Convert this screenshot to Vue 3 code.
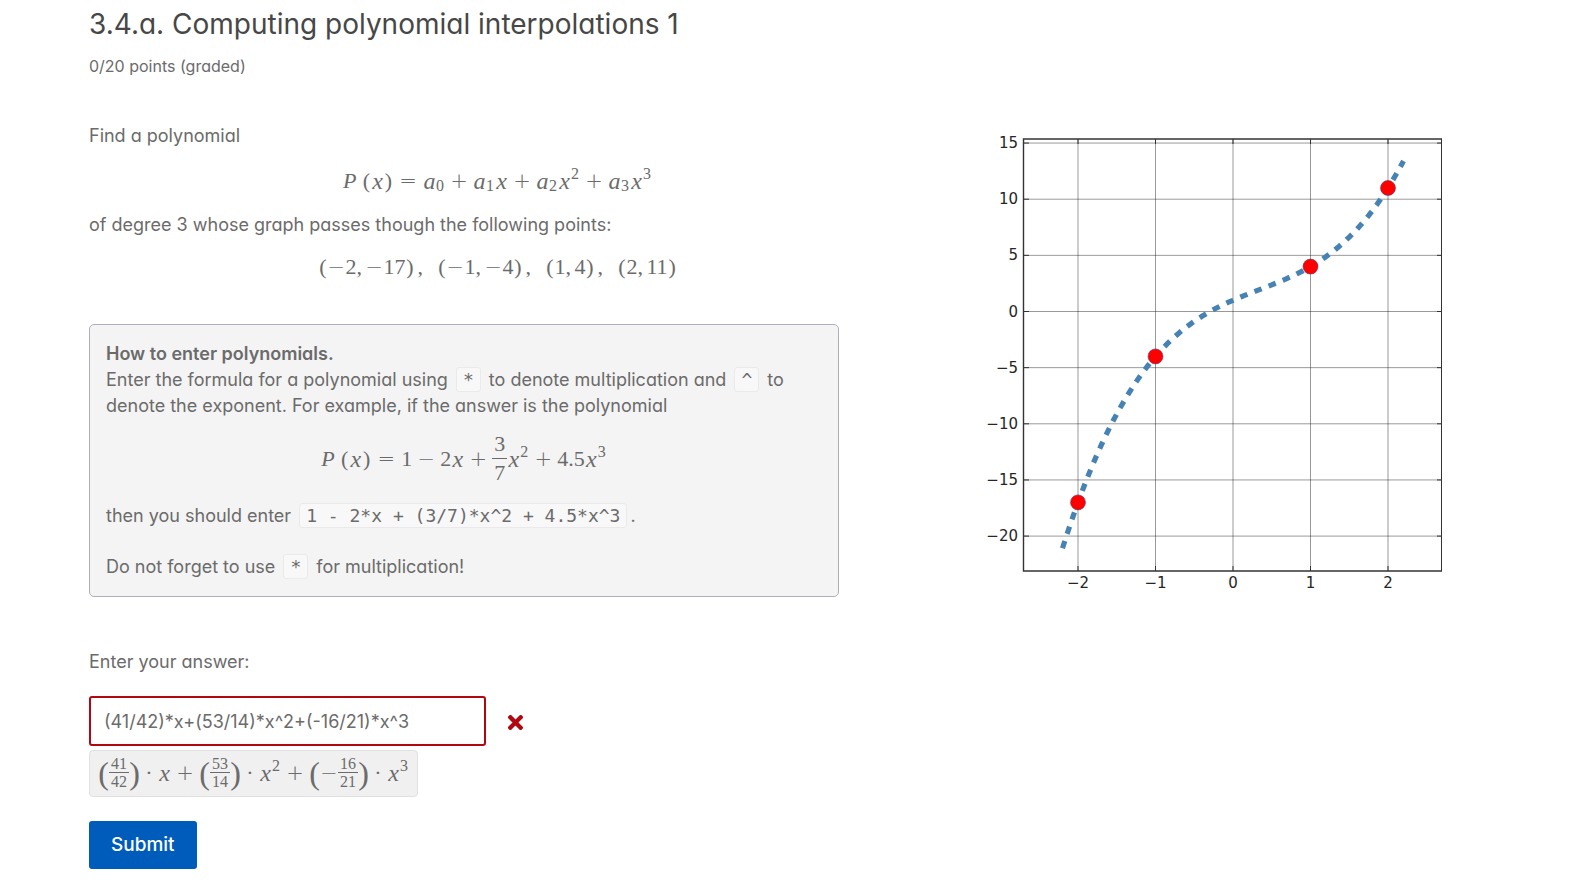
<script setup>
import { ref } from 'vue'

const answer = ref('(41/42)*x+(53/14)*x^2+(-16/21)*x^3')

const px = (x) => 253 + x * 77.5
const py = (y) => 181.5 - y * 11.23
const xTicks = [-2, -1, 0, 1, 2]
const yTicks = [15, 10, 5, 0, -5, -10, -15, -20]
const points = [[-2, -17], [-1, -4], [1, 4], [2, 11]]
const label = (n) => String(n).replace('-', '−')
const cubic = (x) => 1 + 3 * x - x * x + x * x * x
const curve = Array.from({ length: 89 }, (_, i) => {
  const x = -2.2 + i * 0.05
  return `${px(x).toFixed(2)},${py(cubic(x)).toFixed(2)}`
}).join(' ')
</script>

<template>
  <main class="problem">
    <h1>3.4.a. Computing polynomial interpolations 1</h1>
    <p class="points">0/20 points (graded)</p>

    <div class="columns">
      <section class="statement">
        <p>Find a polynomial</p>
        <div class="math display first">
          <span class="cap">P</span><span class="par">(</span><span class="var">x</span><span class="par">)</span><span class="op rel">=</span><span class="var">a</span><sub>0</sub><span class="op">+</span><span class="var">a</span><sub>1</sub><span class="var">x</span><span class="op">+</span><span class="var">a</span><sub>2</sub><span class="var">x</span><sup>2</sup><span class="op">+</span><span class="var">a</span><sub>3</sub><span class="var">x</span><sup>3</sup>
        </div>
        <p>of degree 3 whose graph passes though the following points:</p>
        <div class="math display second">
          <template v-for="(p, i) in points" :key="i"><span class="par">(</span><template v-for="(n, j) in p" :key="j"><span v-if="n < 0" class="op sign">−</span>{{ Math.abs(n) }}<span v-if="j === 0" class="comma">,</span></template><span class="par">)</span><span v-if="i < 3" class="comma wide">,</span></template>
        </div>

        <div class="help">
          <p><strong>How to enter polynomials.</strong><br>Enter the formula for a polynomial using <code>*</code> to denote multiplication and <code>^</code> to denote the exponent. For example, if the answer is the polynomial</p>
          <div class="math display example">
            <span class="cap">P</span><span class="par">(</span><span class="var">x</span><span class="par">)</span><span class="op rel">=</span>1<span class="op">−</span>2<span class="var">x</span><span class="op">+</span><span class="frac"><span>3</span><span>7</span></span><span class="var">x</span><sup>2</sup><span class="op">+</span>4.5<span class="var">x</span><sup>3</sup>
          </div>
          <p>then you should enter <code>1 - 2*x + (3/7)*x^2 + 4.5*x^3</code>.</p>
          <p class="last">Do not forget to use <code>*</code> for multiplication!</p>
        </div>
      </section>

      <svg class="plot" viewBox="0 0 462 470" role="img" aria-label="Graph of the cubic through the four points">
        <g class="grid">
          <line v-for="t in xTicks" :key="'x' + t" :x1="px(t)" :x2="px(t)" y1="9" y2="441" />
          <line v-for="t in yTicks" :key="'y' + t" x1="44" x2="462" :y1="py(t)" :y2="py(t)" />
        </g>
        <g class="tick">
          <template v-for="t in xTicks" :key="'tx' + t">
            <line :x1="px(t)" :x2="px(t)" y1="9" y2="14" />
            <line :x1="px(t)" :x2="px(t)" y1="436" y2="441" />
          </template>
          <template v-for="t in yTicks" :key="'ty' + t">
            <line x1="44" x2="49" :y1="py(t)" :y2="py(t)" />
            <line x1="457" x2="462" :y1="py(t)" :y2="py(t)" />
          </template>
          <line x1="461.5" x2="461.5" y1="9" y2="441" />
        </g>
        <path class="frame" d="M462 9H43.5V441H462" />
        <polyline class="curve" :points="curve" />
        <circle v-for="p in points" :key="p[0]" :cx="px(p[0])" :cy="py(p[1])" r="7.5" />
        <text v-for="t in yTicks" :key="'ly' + t" x="38" :y="py(t) + 5" text-anchor="end">{{ label(t) }}</text>
        <text v-for="t in xTicks" :key="'lx' + t" :x="px(t)" y="458" text-anchor="middle">{{ label(t) }}</text>
      </svg>
    </div>

    <form @submit.prevent>
      <label for="answer">Enter your answer:</label>
      <div class="entry">
        <input id="answer" v-model="answer" type="text">
        <svg class="wrong" viewBox="0 0 14 14" role="img" aria-label="incorrect"><path d="M2.2 2.2L11.8 11.8M11.8 2.2L2.2 11.8" /></svg>
      </div>
      <div class="math preview">
        <span class="big">(</span><span class="frac small"><span>41</span><span>42</span></span><span class="big">)</span><span class="dot">·</span><span class="var">x</span><span class="op">+</span><span class="big">(</span><span class="frac small"><span>53</span><span>14</span></span><span class="big">)</span><span class="dot">·</span><span class="var">x</span><sup>2</sup><span class="op">+</span><span class="big">(</span><span class="op sign">−</span><span class="frac small"><span>16</span><span>21</span></span><span class="big">)</span><span class="dot">·</span><span class="var">x</span><sup>3</sup>
      </div>
      <button type="submit">Submit</button>
    </form>
  </main>
</template>

<style>
body {
  margin: 0;
  background: #fff;
}
</style>

<style scoped>
.problem {
  padding: 4px 89px 18px;
  color: #6b6b6b;
  font-family: Inter, "Open Sans", sans-serif;
  font-feature-settings: "cv11";
  font-size: 18px;
  line-height: 26px;
}
h1 {
  margin: 0;
  color: #474747;
  font-size: 28px;
  font-weight: 400;
  line-height: 40px;
}
p {
  margin: 0;
}
.points {
  margin-top: 9px;
  font-size: 16px;
}
.columns {
  display: grid;
  grid-template-columns: 817fr 462fr;
  column-gap: 74px;
  align-items: start;
  padding-right: 50px;
  margin-top: 44px;
}
.math {
  font-family: "Liberation Serif", serif;
  font-feature-settings: normal;
  font-size: 22px;
  line-height: 28px;
  white-space: nowrap;
}
.display {
  display: flex;
  justify-content: center;
  align-items: center;
}
.first {
  margin: 17px 0 16px;
}
.second {
  margin: 15px 0 0;
}
.cap {
  width: 19px;
  font-style: italic;
}
.var {
  display: inline-block;
  width: 13px;
  font-size: 24px;
  font-style: italic;
  text-align: center;
}
.par {
  width: 9px;
  text-align: center;
}
.op {
  width: 18px;
  margin: 0 5px;
  font-family: "DejaVu Sans", sans-serif;
  font-size: 21px;
  font-weight: 200;
  text-align: center;
}
.rel {
  margin: 0 6px;
}
.sign {
  margin: 0;
}
.comma {
  width: 9px;
}
.wide {
  width: 20px;
  padding-left: 3px;
}
sub,
sup {
  width: 9px;
  font-size: 16px;
  line-height: 16px;
}
sub {
  margin-top: 10px;
}
sup {
  margin-bottom: 14px;
}
.frac {
  display: inline-flex;
  flex-direction: column;
  text-align: center;
}
.frac span {
  padding: 0 2px;
}
.frac span + span {
  border-top: 1px solid #6b6b6b;
}
.help {
  box-sizing: border-box;
  max-width: 750px;
  margin-top: 43px;
  padding: 16px;
  border: 1px solid #adb0bb;
  border-radius: 5px;
  background: #f4f4f4;
}
strong {
  font-weight: 600;
}
code {
  margin: 0 3px;
  padding: 1px 6px;
  border: 1px solid #eaeaea;
  border-radius: 3px;
  background: #f8f8f8;
  font-family: "DejaVu Sans Mono", monospace;
  font-size: 18px;
  line-height: 22px;
}
.example {
  margin: 11px 0 16px;
}
.last {
  margin-top: 25px;
}
.plot {
  display: block;
  width: 100%;
  margin-top: 7px;
}
.grid line {
  stroke: #000;
  stroke-opacity: 0.4;
}
.tick line {
  stroke: #333;
}
.frame {
  fill: none;
  stroke: #333;
  stroke-width: 1.4;
}
.curve {
  fill: none;
  stroke: #4682b4;
  stroke-width: 5.2;
  stroke-dasharray: 7.6 7.6;
}
circle {
  fill: #f00;
  stroke: #5a3a6a;
  stroke-width: 0.6;
}
.plot text {
  fill: #262626;
  font-family: "DejaVu Sans", sans-serif;
  font-size: 15px;
}
form {
  display: flex;
  flex-direction: column;
  align-items: flex-start;
  margin-top: 49px;
}
.entry {
  display: flex;
  align-items: center;
  gap: 22px;
  margin-top: 21px;
}
input {
  box-sizing: border-box;
  width: 397px;
  height: 50px;
  padding: 0 13px;
  border: 2px solid #b20610;
  border-radius: 3px;
  background: #fff;
  color: #6b6b6b;
  font: inherit;
}
.wrong {
  width: 15px;
  height: 15px;
  margin-top: 2px;
}
.wrong path {
  fill: none;
  stroke: #b20610;
  stroke-linecap: square;
  stroke-linejoin: round;
  stroke-width: 4;
}
.preview {
  display: flex;
  align-items: center;
  box-sizing: border-box;
  height: 47px;
  margin-top: 4px;
  padding: 0 8px 2px;
  border: 1px solid #e0e0e0;
  border-radius: 4px;
  background: #f0f0f0;
}
.small {
  font-size: 16px;
  line-height: 17px;
}
.big {
  width: 11px;
  font-size: 32px;
  text-align: center;
}
.dot {
  width: 18px;
  text-align: center;
}
button {
  height: 48px;
  margin-top: 24px;
  padding: 0 22px;
  border: 0;
  border-radius: 3px;
  background: #005cbb;
  color: #fff;
  font: inherit;
  font-size: 19px;
  font-weight: 500;
}
</style>
